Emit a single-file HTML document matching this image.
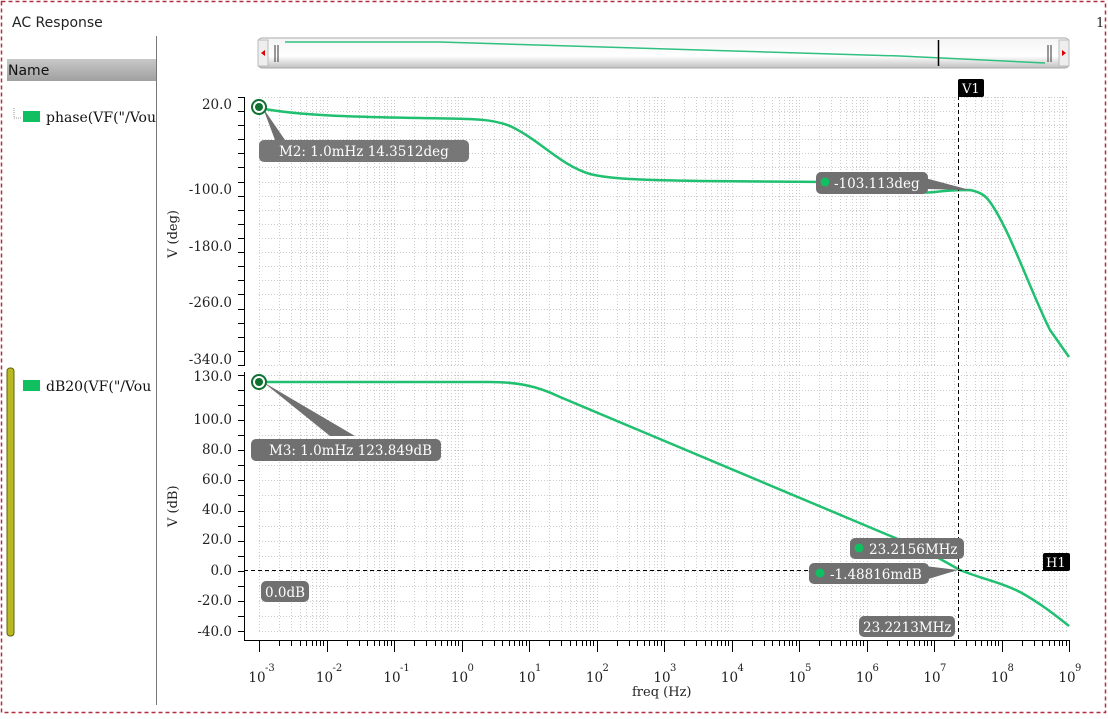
<!DOCTYPE html>
<html><head><meta charset="utf-8"><style>
body{margin:0;width:1108px;height:715px;background:#fff;overflow:hidden;font-family:"DejaVu Serif","Liberation Serif",serif;}
</style></head><body>
<svg id="s" width="1108" height="715" xmlns="http://www.w3.org/2000/svg" font-family="DejaVu Serif, Liberation Serif, serif">
<rect x="1.5" y="1.5" width="1104" height="711" fill="none" stroke="#b03040" stroke-width="1.5" stroke-dasharray="4,3"/>
<text x="12" y="27" font-size="14" font-family="DejaVu Sans, Liberation Sans, sans-serif" fill="#222">AC Response</text>
<text x="1096" y="27" font-size="13" fill="#222">1</text>
<line x1="156.5" y1="36" x2="156.5" y2="705" stroke="#777"/>
<defs><linearGradient id="g" x1="0" y1="0" x2="0" y2="1"><stop offset="0" stop-color="#c8c8c8"/><stop offset="1" stop-color="#a0a0a0"/></linearGradient>
<linearGradient id="sb" x1="0" y1="0" x2="0" y2="1"><stop offset="0" stop-color="#f4f4f4"/><stop offset="0.6" stop-color="#fff"/><stop offset="1" stop-color="#c0c0c0"/></linearGradient></defs>
<rect x="7" y="59" width="149" height="22" fill="url(#g)"/>
<text x="8" y="75" font-size="14" font-family="DejaVu Sans, Liberation Sans, sans-serif" fill="#111">Name</text>
<line x1="14" y1="108" x2="14" y2="118" stroke="#999" stroke-dasharray="1,1"/><line x1="14" y1="118" x2="22" y2="118" stroke="#999" stroke-dasharray="1,1"/>
<rect x="23" y="111" width="17" height="11" fill="#10c060"/>
<text x="46" y="122" font-size="14" fill="#111">phase(VF("/Vou</text>
<rect x="7" y="368" width="7" height="268" rx="3" fill="#b8b820" stroke="#606010"/>
<rect x="23" y="380" width="17" height="11" fill="#10c060"/>
<text x="46" y="391" font-size="14" fill="#111">dB20(VF("/Vou</text>
<rect x="258" y="38" width="811" height="30" rx="4" fill="url(#sb)" stroke="#aaa"/>
<rect x="258" y="40" width="10" height="26" fill="#eee" stroke="#bbb"/>
<rect x="1059" y="40" width="10" height="26" fill="#eee" stroke="#bbb"/>
<path d="M261 53 l4 -3 v6z" fill="#d00"/><path d="M1066 53 l-4 -3 v6z" fill="#d00"/>
<line x1="275" y1="45" x2="275" y2="62" stroke="#333"/><line x1="278" y1="45" x2="278" y2="62" stroke="#333"/>
<line x1="1048" y1="45" x2="1048" y2="62" stroke="#333"/><line x1="1051" y1="45" x2="1051" y2="62" stroke="#333"/>
<polyline points="285,42 440,42 700,50 900,56 1045,63" fill="none" stroke="#30c080" stroke-width="1.5"/>
<line x1="938.5" y1="40" x2="938.5" y2="66" stroke="#000" stroke-width="1.5"/>
<g id="grid"></g>
<g id="axes" font-size="13" fill="#222"></g>
<path d="M259,108 C300,116 360,117 420,118 C470,119 490,118 510,126 C540,140 560,165 590,174 C610,179 640,180 700,181 L830,182 C880,183 910,195 935,192 C950,190 960,190 970,190 C980,192 985,195 990,202 C1010,230 1030,290 1050,330 L1069,357" fill="none" stroke="#20c070" stroke-width="2.5"/>
<path d="M259,382 L490,382 C515,382 535,385 560,397 L900,540 C930,552 945,562 960,570 C985,580 1000,582 1020,592 C1040,603 1055,615 1069,626" fill="none" stroke="#20c070" stroke-width="2.5"/>
<line x1="958.5" y1="96" x2="958.5" y2="640" stroke="#000" stroke-dasharray="4,3"/>
<line x1="244" y1="570.5" x2="1069" y2="570.5" stroke="#000" stroke-dasharray="4,3"/>
<rect x="958" y="79" width="26" height="18" rx="2" fill="#000"/><text x="962" y="93" font-size="13" fill="#fff">V1</text>
<rect x="1043" y="553" width="27" height="18" rx="2" fill="#000"/><text x="1046" y="567" font-size="13" fill="#fff">H1</text>
<g font-size="13.5" fill="#fff">
<path d="M263,108 L285,140 L275,140z" fill="#707070"/>
<rect x="259" y="140" width="210" height="22" rx="5" fill="#707070" opacity=".95"/><text x="279" y="156">M2: 1.0mHz 14.3512deg</text>
<path d="M263,382 L355,436 L330,436z" fill="#707070"/>
<rect x="251" y="439" width="190" height="22" rx="5" fill="#707070"/><text x="269" y="455">M3: 1.0mHz 123.849dB</text>
<rect x="816" y="172" width="112" height="22" rx="5" fill="#707070"/><path d="M925,178 L970,190 L925,189z" fill="#707070"/><text x="834" y="188">-103.113deg</text>
<rect x="850" y="538" width="114" height="21" rx="5" fill="#707070"/><text x="869" y="554">23.2156MHz</text>
<rect x="809" y="563" width="120" height="21" rx="5" fill="#707070"/><path d="M925,566 L958,570 L925,580z" fill="#707070"/><text x="830" y="579">-1.48816mdB</text>
<rect x="859" y="616" width="96" height="21" rx="5" fill="#707070"/><text x="863" y="632">23.2213MHz</text>
<rect x="261" y="581" width="48" height="21" rx="5" fill="#707070"/><text x="265" y="597">0.0dB</text>
<circle cx="825" cy="182" r="4.5" fill="#10c060"/><circle cx="859" cy="548" r="4.5" fill="#10c060"/><circle cx="820" cy="573" r="4.5" fill="#10c060"/>
</g>
<circle cx="259" cy="107" r="7" fill="#fff" stroke="#107030" stroke-width="2"/><circle cx="259" cy="107" r="4" fill="#107030"/>
<circle cx="259" cy="382" r="7" fill="#fff" stroke="#107030" stroke-width="2"/><circle cx="259" cy="382" r="4" fill="#107030"/>
<text x="177" y="258" font-size="13" fill="#222" transform="rotate(-90 177 258)">V (deg)</text>
<text x="177" y="527" font-size="13" fill="#222" transform="rotate(-90 177 527)">V (dB)</text>
<text x="632" y="696" font-size="13" fill="#222">freq (Hz)</text>
</svg>
<script>
var NS="http://www.w3.org/2000/svg";
function el(p,t,a,txt){var e=document.createElementNS(NS,t);for(var k in a)e.setAttribute(k,a[k]);if(txt!==undefined)e.textContent=txt;document.getElementById(p).appendChild(e);return e;}
var x0=259,dx=67.5;
for(var d=0;d<12;d++)for(var m=1;m<10;m++){var x=Math.round(x0+dx*(d+Math.log10(m)))+.5;
 el("grid","line",{x1:x,y1:97,x2:x,y2:366,stroke:"#ccc","stroke-dasharray":"1,2"});
 el("grid","line",{x1:x,y1:372,x2:x,y2:632,stroke:"#ccc","stroke-dasharray":"1,2"});
 el("axes","line",{x1:x,y1:640,x2:x,y2:m==1?652:646,stroke:"#000"});}
el("axes","line",{x1:1069.5,y1:640,x2:1069.5,y2:652,stroke:"#000"});
el("axes","line",{x1:244,y1:640.5,x2:1070,y2:640.5,stroke:"#000"});
el("axes","line",{x1:244.5,y1:97,x2:244.5,y2:366,stroke:"#000"});
el("axes","line",{x1:244.5,y1:372,x2:244.5,y2:640,stroke:"#000"});
for(var y=97;y<=366;y+=14.1){var yy=Math.round(y)+.5;el("grid","line",{x1:259,y1:yy,x2:1069,y2:yy,stroke:"#ccc","stroke-dasharray":"1,2"});el("axes","line",{x1:238,y1:yy,x2:244,y2:yy,stroke:"#000"});}
for(var y=375;y<=632;y+=15.06){var yy=Math.round(y)+.5;el("grid","line",{x1:259,y1:yy,x2:1069,y2:yy,stroke:"#ccc","stroke-dasharray":"1,2"});el("axes","line",{x1:238,y1:yy,x2:244,y2:yy,stroke:"#000"});}
var tl=[["20.0",109],["-100.0",194],["-180.0",251],["-260.0",307],["-340.0",364],["130.0",381],["100.0",424],["80.0",454],["60.0",484],["40.0",514],["20.0",544],["0.0",575],["-20.0",605],["-40.0",636]];
tl.forEach(function(t){el("axes","text",{x:232,y:t[1],"text-anchor":"end","font-size":"13.5"},t[0]);});
for(var d=0;d<=12;d++){var x=x0+dx*d;var e=(d-3);el("axes","text",{x:x-2,y:682,"text-anchor":"middle","font-size":"13.5"},"10");el("axes","text",{x:x+6,y:671,"font-size":"10"},String(e));}
</script>
</body></html>
